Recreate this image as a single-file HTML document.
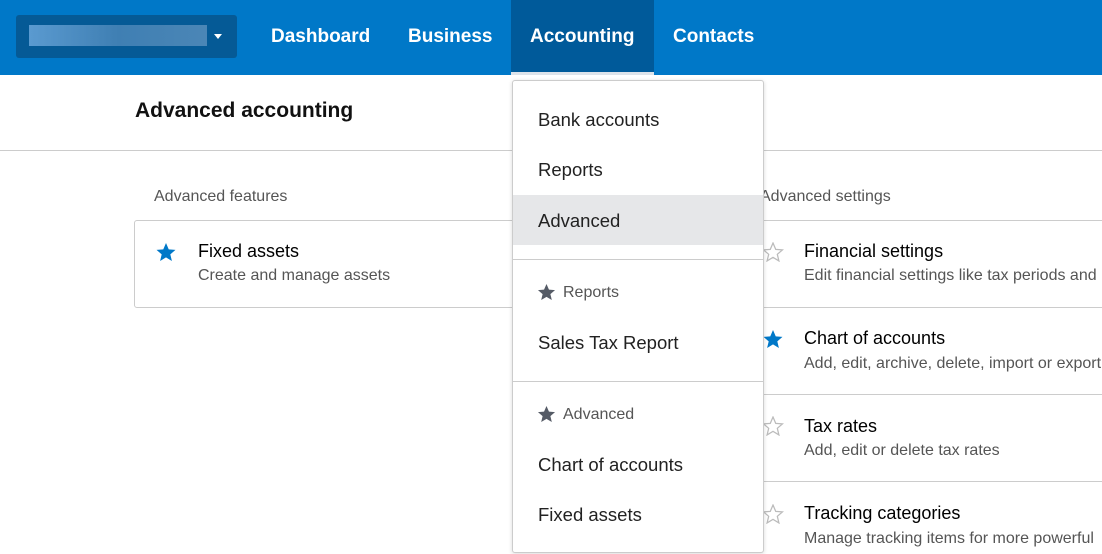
<!DOCTYPE html><html><head><style>
html,body{margin:0;width:1102px;height:554px;overflow:hidden}
body{background:#fff;font-family:"Liberation Sans",Arial,sans-serif;position:relative}
.a{position:absolute}
.nav{left:0;top:0;width:1102px;height:75px;background:#0078c8}
.n{top:26px;color:#fff;font-weight:bold;font-size:19px}
.t{color:#000;font-size:18px}
.s{color:#555;font-size:16px;white-space:nowrap}
.dd{left:512px;top:80px;width:250px;height:471px;border:1px solid #ccc;border-radius:3px;background:#fff;box-shadow:0 1px 4px rgba(0,0,0,.15)}
.di{left:25px;font-size:18.5px;color:#222}
.dh{left:25px;font-size:16px;color:#555}
svg{position:absolute}
</style></head><body>
<svg width="0" height="0"><defs><path id="st" d="M10 1l2.6 6 6.4.5-4.9 4.2 1.5 6.3L10 14.6 4.4 18l1.5-6.3L1 7.5l6.4-.5z"/></defs></svg>
<div class="a nav"></div>
<div class="a" style="left:16px;top:15px;width:221px;height:43px;background:#055a96;border-radius:3px"></div>
<div class="a" style="left:29px;top:25px;width:178px;height:21px;background:linear-gradient(90deg,#5a9ad0,#3f7fb3,#4b86b6)"></div>
<div class="a" style="left:214px;top:34px;border:4px solid transparent;border-top:5px solid #fff"></div>
<div class="a n" style="left:271px">Dashboard</div>
<div class="a n" style="left:408px">Business</div>
<div class="a" style="left:511px;top:0;width:143px;height:72px;background:#005a9a"></div>
<div class="a" style="left:511px;top:72px;width:143px;height:3px;background:#dde3ea"></div>
<div class="a n" style="left:530px">Accounting</div>
<div class="a n" style="left:673px">Contacts</div>
<div class="a" style="left:135px;top:99px;font-size:21px;font-weight:bold;color:#111">Advanced accounting</div>
<div class="a" style="left:0;top:150px;width:1102px;height:1px;background:#ccc"></div>
<div class="a s" style="left:154px;top:188px">Advanced features</div>
<div class="a" style="left:134px;top:220px;width:420px;height:86px;border:1px solid #ccc;border-radius:3px"></div>
<svg style="left:155px;top:242px" width="22" height="20" viewBox="0 0 20 19"><use href="#st" fill="#0078c8"/></svg>
<div class="a t" style="left:198px;top:241px">Fixed assets</div>
<div class="a s" style="left:198px;top:267px">Create and manage assets</div>
<div class="a s" style="left:760px;top:188px">Advanced settings</div>
<div class="a" style="left:740px;top:220px;width:400px;height:330px;border:1px solid #ccc;border-bottom:none;border-radius:3px 3px 0 0"></div>
<div class="a" style="left:740px;top:307px;width:362px;height:1px;background:#ccc"></div>
<div class="a" style="left:740px;top:394px;width:362px;height:1px;background:#ccc"></div>
<div class="a" style="left:740px;top:481px;width:362px;height:1px;background:#ccc"></div>
<svg style="left:762px;top:242px" width="22" height="20" viewBox="0 0 20 19"><use href="#st" fill="none" stroke="#bbb" stroke-width="1.2"/></svg>
<div class="a t" style="left:804px;top:241px">Financial settings</div>
<div class="a s" style="left:804px;top:267px">Edit financial settings like tax periods and</div>
<svg style="left:762px;top:329px" width="22" height="20" viewBox="0 0 20 19"><use href="#st" fill="#0078c8"/></svg>
<div class="a t" style="left:804px;top:328px">Chart of accounts</div>
<div class="a s" style="left:804px;top:355px">Add, edit, archive, delete, import or export</div>
<svg style="left:762px;top:416px" width="22" height="20" viewBox="0 0 20 19"><use href="#st" fill="none" stroke="#bbb" stroke-width="1.2"/></svg>
<div class="a t" style="left:804px;top:416px">Tax rates</div>
<div class="a s" style="left:804px;top:442px">Add, edit or delete tax rates</div>
<svg style="left:762px;top:504px" width="22" height="20" viewBox="0 0 20 19"><use href="#st" fill="none" stroke="#bbb" stroke-width="1.2"/></svg>
<div class="a t" style="left:804px;top:503px">Tracking categories</div>
<div class="a s" style="left:804px;top:530px">Manage tracking items for more powerful</div>
<div class="a dd">
<div class="a di" style="top:28px">Bank accounts</div>
<div class="a di" style="top:78px">Reports</div>
<div class="a" style="left:0;top:114px;width:250px;height:50px;background:#e6e7e9"></div>
<div class="a di" style="top:129px">Advanced</div>
<div class="a" style="left:0;top:178px;width:250px;height:1px;background:#ccc"></div>
<svg style="left:24px;top:202px" width="19" height="18" viewBox="0 0 20 19"><use href="#st" fill="#555b66"/></svg>
<div class="a dh" style="left:50px;top:203px">Reports</div>
<div class="a di" style="top:251px">Sales Tax Report</div>
<div class="a" style="left:0;top:300px;width:250px;height:1px;background:#ccc"></div>
<svg style="left:24px;top:324px" width="19" height="18" viewBox="0 0 20 19"><use href="#st" fill="#555b66"/></svg>
<div class="a dh" style="left:50px;top:325px">Advanced</div>
<div class="a di" style="top:373px">Chart of accounts</div>
<div class="a di" style="top:423px">Fixed assets</div>
</div>
</body></html>
